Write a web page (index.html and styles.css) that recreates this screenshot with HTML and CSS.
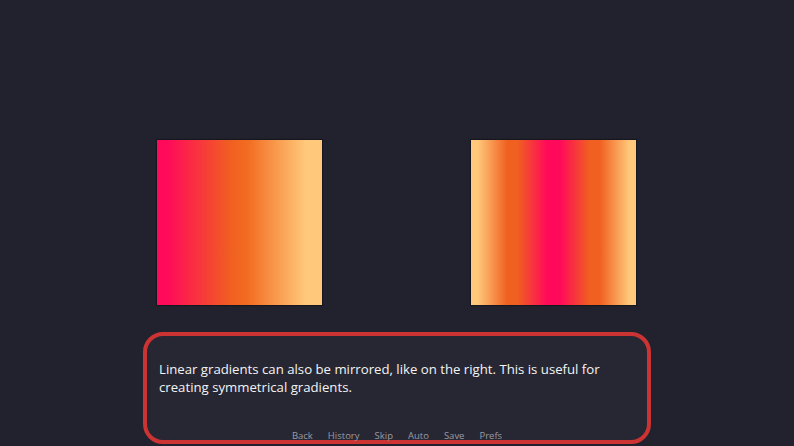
FILE: index.html
```html
<!DOCTYPE html>
<html>
<head>
<meta charset="utf-8">
<link rel="stylesheet" href="styles.css">
</head>
<body>
<div class="stage">
  <div class="squares">
    <div class="sq sq-linear"></div>
    <div class="sq sq-mirror"></div>
  </div>
  <div class="dialog">
    <p class="say">Linear gradients can also be mirrored, like on the right. This is useful for creating symmetrical gradients.</p>
    <nav class="menu">
      <span>Back</span><span>History</span><span>Skip</span><span>Auto</span><span>Save</span><span>Prefs</span>
    </nav>
  </div>
</div>
</body>
</html>
```
FILE: styles.css
```css
html, body {
  margin: 0;
  padding: 0;
  background: #22222e;
  width: 794px;
  height: 446px;
  overflow: hidden;
}
.stage {
  width: 794px;
  height: 446px;
  display: flex;
  flex-direction: column;
  align-items: center;
  font-family: "Open Sans", "DejaVu Sans", sans-serif;
}
.squares {
  margin-top: 140px;
  display: flex;
  gap: 149px;
  margin-right: 1px;
}
.sq {
  width: 165px;
  height: 165px;
  box-shadow: 0 0 1px 1px rgba(0,0,0,0.3);
}
.sq-linear {
  background: linear-gradient(to right, #ff0a5a 0%, #ff0a5a 6%, #f06020 45%, #f26c22 55%, #ffc87a 90%, #ffc87a 100%);
}
.sq-mirror {
  background: linear-gradient(to right, #ffc87a 0%, #ffc87a 4%, #f06020 22%, #f06020 28%, #ff0a5a 46%, #ff0a5a 54%, #f06020 72%, #f06020 78%, #ffc87a 96%, #ffc87a 100%);
}
.dialog {
  margin-top: 27px;
  width: 508px;
  height: 112px;
  border: 4px solid #cc3333;
  border-radius: 20px;
  background: #272733;
  box-sizing: border-box;
  padding: 24px 12px 0 12px;
  display: flex;
  flex-direction: column;
}
.say {
  margin: 0;
  color: #f4f4f4;
  font-size: 13.2px;
  font-weight: 500;
  line-height: 18px;
}
.menu {
  margin-top: auto;
  display: flex;
  justify-content: center;
  gap: 15px;
  font-size: 9.5px;
  line-height: 12px;
  color: #9a9aa4;
  margin-bottom: -2px;
}
```
